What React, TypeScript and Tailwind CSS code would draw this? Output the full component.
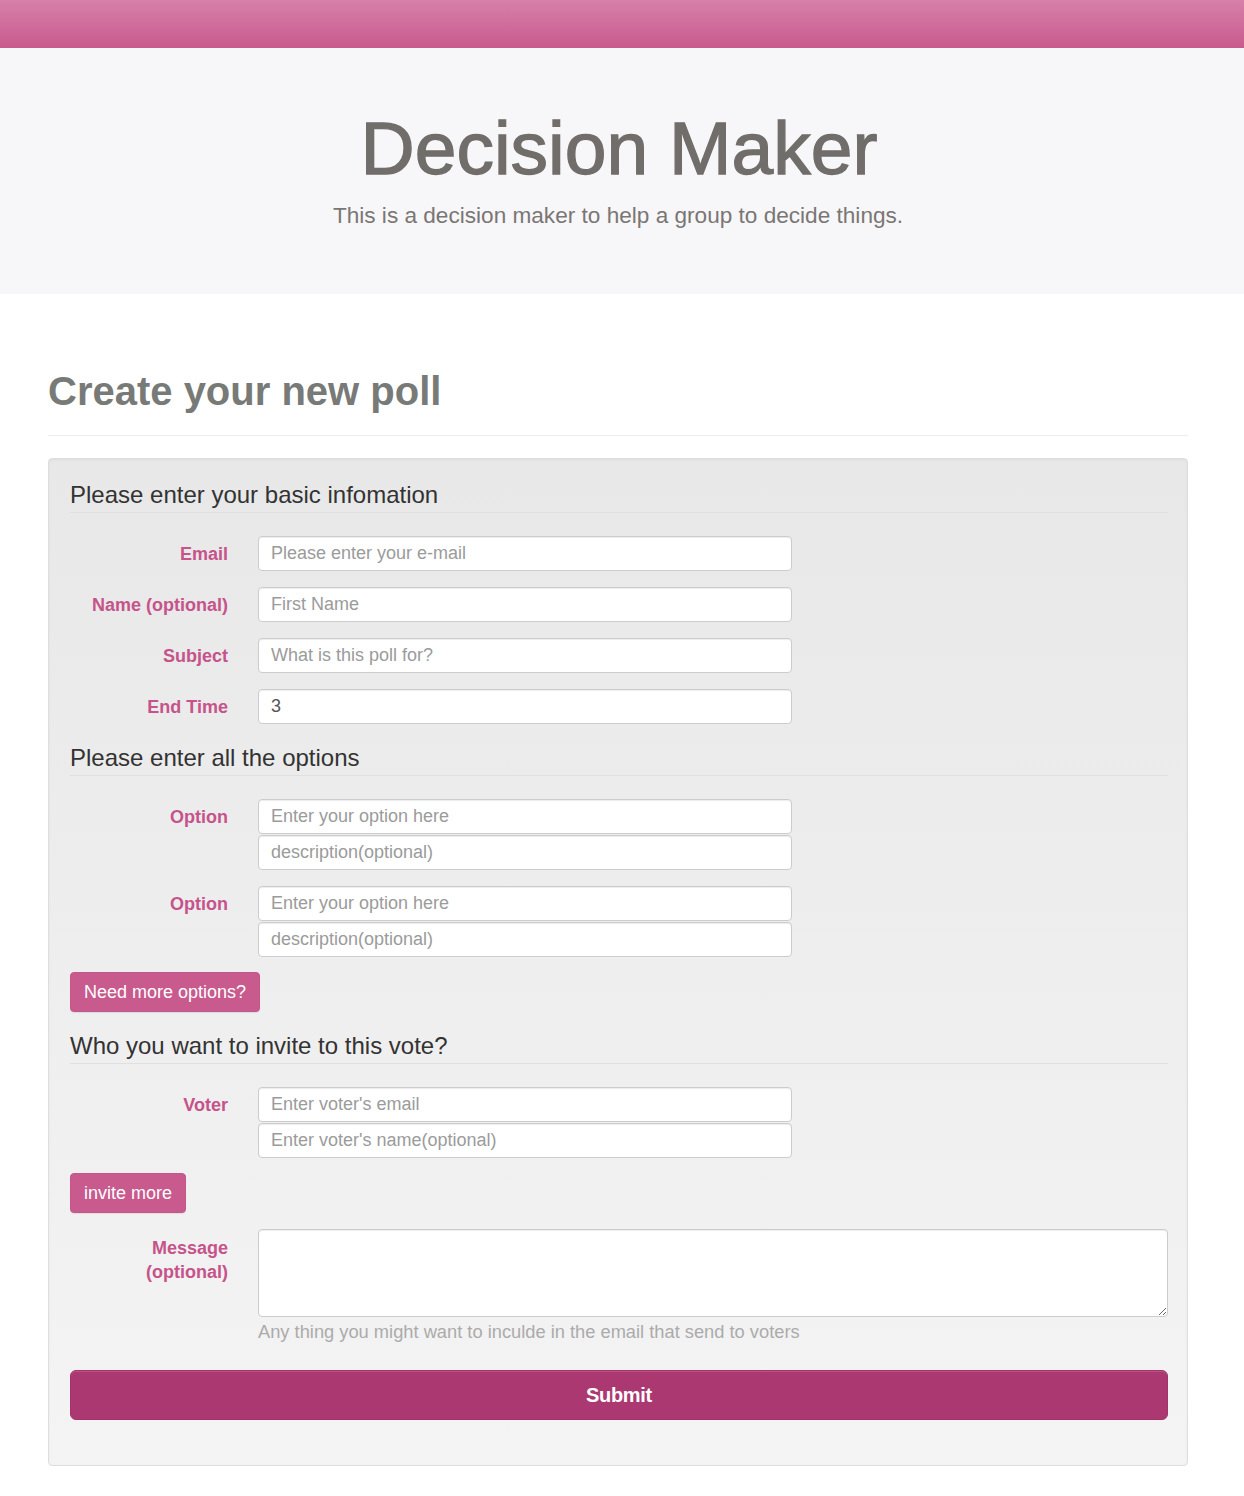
import React from "react";

const inputCls =
  "block h-[35px] w-[534px] rounded-[4px] border border-[#cccccc] bg-white px-[12px] text-[18px] text-[#555] shadow-[inset_0_1px_1px_rgba(0,0,0,0.075)] outline-none placeholder:text-[#9b9b9b]";

function Legend({ children }: { children: React.ReactNode }) {
  return (
    <div className="mb-[23px] border-b border-[#e0e0e0] text-[24px] leading-[35px] text-[#333]">
      {children}
    </div>
  );
}

function Row({ label, children, last }: { label: React.ReactNode; children: React.ReactNode; last?: boolean }) {
  return (
    <div className={`flex ${last ? "" : "mb-[16px]"}`}>
      <label className="flex h-[35px] w-[158px] shrink-0 items-center justify-end pt-[2px] text-[18px] font-bold text-[#c6538a]">
        {label}
      </label>
      <div className="ml-[30px] flex flex-col gap-[1px]">{children}</div>
    </div>
  );
}

function PinkButton({ children }: { children: React.ReactNode }) {
  return (
    <button className="mb-[16px] h-[40px] rounded-[4px] border border-[#c4568a] bg-[#c85a8e] px-[13px] text-[18px] text-white shadow-[0_1px_1px_rgba(0,0,0,0.08)]">
      {children}
    </button>
  );
}

export default function App() {
  return (
    <div className="min-h-[1496px] bg-white font-['Liberation_Sans',Arial,sans-serif]">
      <div className="h-[48px] bg-linear-to-b from-[#d780a9] to-[#c8598e]" />

      <div className="flex h-[246px] flex-col items-center bg-[#f7f7f9] pt-[63px]">
        <h1 className="-ml-[6px] text-[75px] leading-none text-[#716d6a] [-webkit-text-stroke:1.3px_#716d6a]">
          Decision Maker
        </h1>
        <p className="-ml-[8px] mt-[19px] text-[22.6px] leading-none text-[#7a7674]">
          This is a decision maker to help a group to decide things.
        </p>
      </div>

      <div className="ml-[48px] w-[1140px]">
        <h2 className="mt-[77px] border-b border-[#eeeeee] pb-[24px] text-[40px] font-bold leading-none text-[#787a77]">
          Create your new poll
        </h2>

        <form
          className="mt-[22px] rounded-[4px] border border-[#dedede] bg-linear-to-b from-[#e8e8e8] to-[#f4f4f4] pl-[21px] pr-[19px] pt-[18px] pb-[45px] shadow-[inset_0_1px_3px_rgba(0,0,0,0.05)]"
          onSubmit={(e) => e.preventDefault()}
        >
          <Legend>Please enter your basic infomation</Legend>
          <Row label="Email">
            <input className={inputCls} placeholder="Please enter your e-mail" />
          </Row>
          <Row label="Name (optional)">
            <input className={inputCls} placeholder="First Name" />
          </Row>
          <Row label="Subject">
            <input className={inputCls} placeholder="What is this poll for?" />
          </Row>
          <Row label="End Time">
            <input className={inputCls} defaultValue="3" />
          </Row>

          <Legend>Please enter all the options</Legend>
          <Row label="Option">
            <input className={inputCls} placeholder="Enter your option here" />
            <input className={inputCls} placeholder="description(optional)" />
          </Row>
          <div className="mb-[15px]">
            <Row label="Option" last>
              <input className={inputCls} placeholder="Enter your option here" />
              <input className={inputCls} placeholder="description(optional)" />
            </Row>
          </div>
          <PinkButton>Need more options?</PinkButton>

          <Legend>Who you want to invite to this vote?</Legend>
          <div className="mb-[15px]">
            <Row label="Voter" last>
              <input className={inputCls} placeholder="Enter voter's email" />
              <input className={inputCls} placeholder="Enter voter's name(optional)" />
            </Row>
          </div>
          <PinkButton>invite more</PinkButton>

          <div className="flex">
            <label className="w-[158px] shrink-0 pt-[7px] text-right text-[18px] font-bold leading-[24px] text-[#c6538a]">
              <span className="block">Message</span>
              <span className="block">(optional)</span>
            </label>
            <div className="ml-[30px] flex-1">
              <textarea className="block h-[88px] w-full rounded-[4px] border border-[#cccccc] bg-white px-[12px] py-[6px] text-[18px] shadow-[inset_0_1px_1px_rgba(0,0,0,0.075)] outline-none" />
              <p className="mt-[5px] text-[18.3px] leading-[20px] text-[#ababab]">
                Any thing you might want to inculde in the email that send to voters
              </p>
            </div>
          </div>

          <button
            type="submit"
            className="mt-[28px] h-[50px] w-full rounded-[6px] border border-[#a53369] bg-[#ab3870] text-[20px] font-bold tracking-[-0.3px] text-white shadow-[inset_0_1px_0_rgba(255,255,255,0.15)]"
          >
            Submit
          </button>
        </form>
      </div>
    </div>
  );
}
